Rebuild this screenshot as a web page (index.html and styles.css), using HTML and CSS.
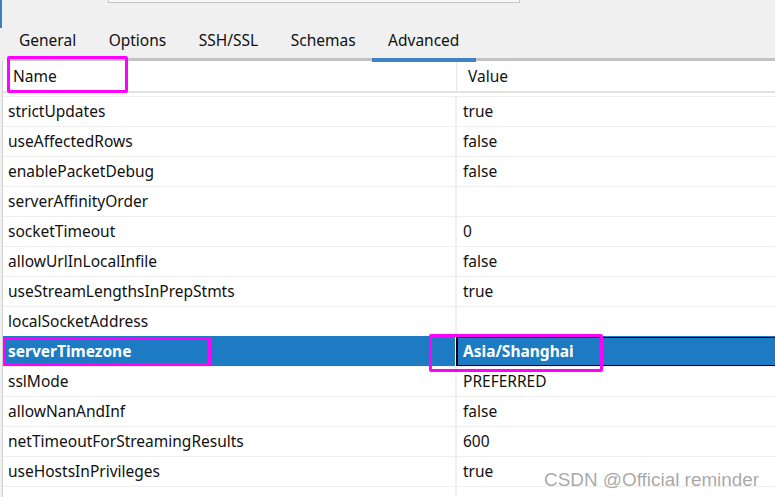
FILE: index.html
```html
<!DOCTYPE html>
<html lang="en">
<head>
<meta charset="utf-8">
<title>Driver properties</title>
<link rel="stylesheet" href="styles.css">
</head>
<body>
<div class="page">
  <div class="topbar">
    <div class="edge"></div>
    <div class="field"></div>
  </div>
  <div class="tabs">
    <div class="tab">General</div>
    <div class="tab">Options</div>
    <div class="tab">SSH/SSL</div>
    <div class="tab">Schemas</div>
    <div class="tab active">Advanced</div>
  </div>
  <div class="table">
    <div class="head">
      <div class="hcell name">Name</div>
      <div class="hcell value">Value</div>
    </div>
    <div class="rows">
      <div class="row"><div class="cell name">strictUpdates</div><div class="cell value">true</div></div>
      <div class="row"><div class="cell name">useAffectedRows</div><div class="cell value">false</div></div>
      <div class="row"><div class="cell name">enablePacketDebug</div><div class="cell value">false</div></div>
      <div class="row"><div class="cell name">serverAffinityOrder</div><div class="cell value"></div></div>
      <div class="row"><div class="cell name">socketTimeout</div><div class="cell value">0</div></div>
      <div class="row"><div class="cell name">allowUrlInLocalInfile</div><div class="cell value">false</div></div>
      <div class="row"><div class="cell name">useStreamLengthsInPrepStmts</div><div class="cell value">true</div></div>
      <div class="row"><div class="cell name">localSocketAddress</div><div class="cell value"></div></div>
      <div class="row selected"><div class="cell name">serverTimezone</div><div class="cell value">Asia/Shanghai</div></div>
      <div class="row"><div class="cell name">sslMode</div><div class="cell value">PREFERRED</div></div>
      <div class="row"><div class="cell name">allowNanAndInf</div><div class="cell value">false</div></div>
      <div class="row"><div class="cell name">netTimeoutForStreamingResults</div><div class="cell value">600</div></div>
      <div class="row"><div class="cell name">useHostsInPrivileges</div><div class="cell value">true</div></div>
      <div class="row last"><div class="cell name">useServerPrepStmts</div><div class="cell value">false</div></div>
    </div>
  </div>
  <div class="mark mark-name"></div>
  <div class="mark mark-key"></div>
  <div class="mark mark-val"></div>
  <div class="watermark">CSDN @Official reminder</div>
</div>
</body>
</html>
```
FILE: styles.css
```css
html, body {
  margin: 0;
  padding: 0;
  background: #f0f0f0;
  overflow: hidden;
}
body {
  font-family: "Noto Sans", "Open Sans", sans-serif;
  font-size: 15.5px;
  color: #111;
}
.page {
  position: relative;
  width: 775px;
  height: 497px;
  overflow: hidden;
}
.topbar {
  height: 31px;
  display: flex;
  align-items: flex-start;
}
.edge {
  width: 2px;
  height: 28px;
  background: #3d7fc1;
}
.field {
  margin-left: 106px;
  width: 410px;
  height: 2px;
  border: 1px solid #c4c4c4;
  border-top: none;
  background: #f8f8f8;
}
.tabs {
  display: flex;
  height: 27px;
  margin-left: 7px;
  border-bottom: 3px solid #c2c2c2;
}
.tab {
  padding: 0 16px;
  margin-right: 0.5px;
  line-height: 18px;
  font-size: 15.5px;
  color: #111;
  position: relative;
}
.tab:first-child { padding-left: 12px; }
.tab.active { padding-right: 17px; }
.tab.active::after {
  content: "";
  position: absolute;
  left: 0;
  right: 0;
  bottom: -4px;
  height: 4px;
  background: #3f83c6;
}
.table {
  margin-left: 2px;
  border-left: 1px solid #cfcfcf;
  background: #fff;
  width: 820px;
  height: 440px;
}
.head {
  display: flex;
  height: 30px;
  border-bottom: 2px solid #e2e2e2;
}
.hcell {
  line-height: 30px;
  color: #111;
}
.hcell.name {
  width: 443px;
  padding-left: 10px;
  border-right: 1px solid #e6e6e6;
}
.hcell.value {
  padding-left: 11px;
}
.rows {
  padding-top: 3px;
}
.row {
  display: flex;
  height: 29px;
  border-top: 1px solid #efefef;
}
.cell {
  line-height: 29px;
  white-space: nowrap;
}
.row.last .cell {
  line-height: 33px;
}
.cell.name {
  width: 447px;
  padding-left: 5px;
  border-right: 2px solid #f0f0f0;
}
.cell.value {
  flex: 1;
  padding-left: 6px;
}
.row.selected {
  background: #1c7bc3;
  color: #fff;
  font-weight: bold;
  border-top-color: #1c7bc3;
}
.row.selected .cell.name {
  border-right: 1px solid #ffffff;
}
.row.selected .cell.value {
  border: 1px solid #000;
  border-left-width: 2px;
  line-height: 27px;
  padding-left: 5px;
}
.mark {
  position: absolute;
  border: 3px solid #ff00ff;
  border-radius: 2px;
  box-sizing: border-box;
}
.mark-name { left: 7px; top: 56px; width: 121px; height: 37px; }
.mark-key { left: 3px; top: 337px; width: 208px; height: 29px; }
.mark-val { left: 429px; top: 334px; width: 174px; height: 38px; }
.watermark {
  position: absolute;
  left: 544px;
  top: 469px;
  font-family: "Liberation Sans", Arial, sans-serif;
  font-size: 18.9px;
  color: rgba(140, 140, 140, 0.75);
  white-space: nowrap;
}
```
